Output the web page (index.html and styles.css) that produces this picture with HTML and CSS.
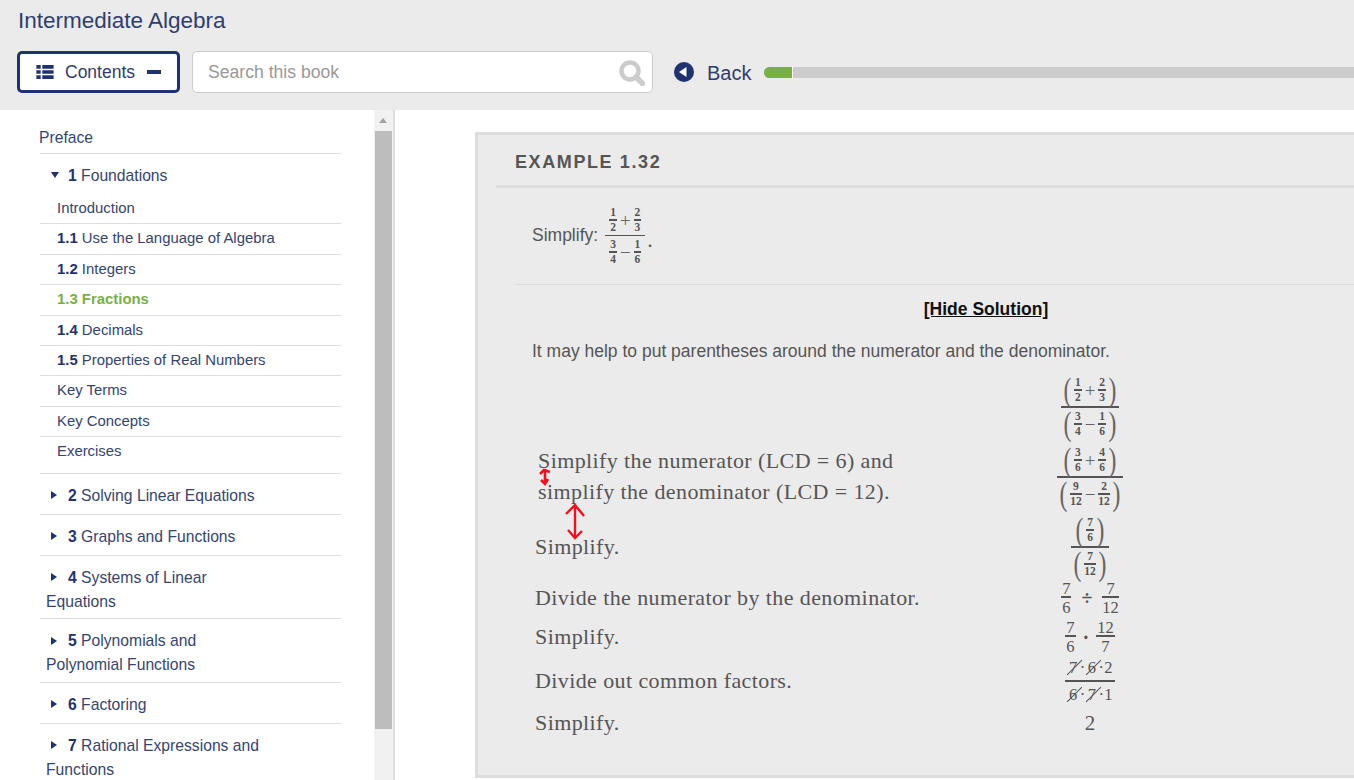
FILE: index.html
```html
<!DOCTYPE html>
<html lang="en">
<head>
<meta charset="utf-8">
<title>Intermediate Algebra</title>
<link rel="stylesheet" href="styles.css">
</head>
<body>
<header class="top">
  <h1 class="book-title">Intermediate Algebra</h1>
  <div class="toolbar">
    <button class="contents-btn">
      <svg class="list-icon" viewBox="0 0 16 13" width="18" height="14"><path d="M0 0h4v3.4H0zM5.5 0H16v3.4H5.5zM0 4.8h4v3.4H0zM5.5 4.8H16v3.4H5.5zM0 9.6h4V13H0zM5.5 9.6H16V13H5.5z"/></svg>
      <span>Contents</span>
      <span class="minus"></span>
    </button>
    <div class="search">
      <span class="placeholder">Search this book</span>
      <svg class="search-icon" viewBox="0 0 26 26" width="26" height="26"><circle cx="11" cy="11" r="8.5" fill="none" stroke="#ccc" stroke-width="4.5"/><path d="M17 17l6.5 6.5" stroke="#ccc" stroke-width="5.5" stroke-linecap="round"/></svg>
    </div>
    <a class="back">
      <svg viewBox="0 0 20 20" width="20" height="20"><circle cx="10" cy="10" r="10" fill="#1f3370"/><path d="M5 10l7.5-5v10z" fill="#fff"/></svg>
      <span>Back</span>
    </a>
    <div class="progress"><div class="progress-fill"></div></div>
  </div>
</header>
<div class="main">
  <aside class="sidebar">
    <nav class="toc">
      <div class="toc-preface">Preface</div>
      <div class="chapter open">
        <div class="chapter-title"><span class="tri tri-down"></span><b>1</b> Foundations</div>
        <ul class="sections">
          <li>Introduction</li>
          <li><b>1.1</b> Use the Language of Algebra</li>
          <li><b>1.2</b> Integers</li>
          <li class="current"><b>1.3</b> Fractions</li>
          <li><b>1.4</b> Decimals</li>
          <li><b>1.5</b> Properties of Real Numbers</li>
          <li>Key Terms</li>
          <li>Key Concepts</li>
          <li>Exercises</li>
        </ul>
      </div>
      <div class="chapter"><div class="chapter-title"><span class="tri"></span><b>2</b> Solving Linear Equations</div></div>
      <div class="chapter"><div class="chapter-title"><span class="tri"></span><b>3</b> Graphs and Functions</div></div>
      <div class="chapter two-line"><div class="chapter-title"><span class="tri"></span><b>4</b> Systems of Linear<br>Equations</div></div>
      <div class="chapter two-line"><div class="chapter-title"><span class="tri"></span><b>5</b> Polynomials and<br>Polynomial Functions</div></div>
      <div class="chapter"><div class="chapter-title"><span class="tri"></span><b>6</b> Factoring</div></div>
      <div class="chapter two-line"><div class="chapter-title"><span class="tri"></span><b>7</b> Rational Expressions and<br>Functions</div></div>
    </nav>
    <div class="scrollbar"><div class="scroll-arrow"></div><div class="scroll-thumb"></div></div>
  </aside>
  <main class="content">
    <section class="example">
      <div class="example-head">EXAMPLE 1.32</div>
      <div class="problem">
        <span class="problem-label">Simplify:</span>
        <span class="frac big-frac">
          <span class="num"><span class="frac tiny"><span class="num">1</span><span class="den">2</span></span><span class="op">+</span><span class="frac tiny"><span class="num">2</span><span class="den">3</span></span></span>
          <span class="den"><span class="frac tiny"><span class="num">3</span><span class="den">4</span></span><span class="op">−</span><span class="frac tiny"><span class="num">1</span><span class="den">6</span></span></span>
        </span>
        <span class="period">.</span>
      </div>
      <div class="hide-row"><a class="hide-link">[Hide Solution]</a></div>
      <p class="intro">It may help to put parentheses around the numerator and the denominator.</p>
      <div class="steps">
        <div class="step h1">
          <div class="step-text"></div>
          <div class="step-math">
            <span class="frac paren-frac">
              <span class="num"><i class="p">(</i><span class="frac tiny"><span class="num">1</span><span class="den">2</span></span><span class="op">+</span><span class="frac tiny"><span class="num">2</span><span class="den">3</span></span><i class="p">)</i></span>
              <span class="den"><i class="p">(</i><span class="frac tiny"><span class="num">3</span><span class="den">4</span></span><span class="op">−</span><span class="frac tiny"><span class="num">1</span><span class="den">6</span></span><i class="p">)</i></span>
            </span>
          </div>
        </div>
        <div class="step h2">
          <div class="step-text inset">Simplify the numerator (LCD = 6) and<br>simplify the denominator (LCD = 12).</div>
          <div class="step-math">
            <span class="frac paren-frac">
              <span class="num"><i class="p">(</i><span class="frac tiny"><span class="num">3</span><span class="den">6</span></span><span class="op">+</span><span class="frac tiny"><span class="num">4</span><span class="den">6</span></span><i class="p">)</i></span>
              <span class="den"><i class="p">(</i><span class="frac tiny"><span class="num">9</span><span class="den">12</span></span><span class="op">−</span><span class="frac tiny"><span class="num">2</span><span class="den">12</span></span><i class="p">)</i></span>
            </span>
          </div>
        </div>
        <div class="step h3">
          <div class="step-text">Simplify.</div>
          <div class="step-math">
            <span class="frac paren-frac">
              <span class="num"><i class="p">(</i><span class="frac tiny"><span class="num">7</span><span class="den">6</span></span><i class="p">)</i></span>
              <span class="den"><i class="p">(</i><span class="frac tiny"><span class="num">7</span><span class="den">12</span></span><i class="p">)</i></span>
            </span>
          </div>
        </div>
        <div class="step h4">
          <div class="step-text">Divide the numerator by the denominator.</div>
          <div class="step-math row-math">
            <span class="frac mid"><span class="num">7</span><span class="den">6</span></span><span class="divide">÷</span><span class="frac mid"><span class="num">7</span><span class="den">12</span></span>
          </div>
        </div>
        <div class="step h5">
          <div class="step-text">Simplify.</div>
          <div class="step-math row-math">
            <span class="frac mid"><span class="num">7</span><span class="den">6</span></span><span class="cdot">·</span><span class="frac mid"><span class="num">12</span><span class="den">7</span></span>
          </div>
        </div>
        <div class="step h6">
          <div class="step-text">Divide out common factors.</div>
          <div class="step-math">
            <span class="frac mid cancel-frac">
              <span class="num"><s class="x">7</s>·<s class="x">6</s>·2</span>
              <span class="den"><s class="x">6</s>·<s class="x">7</s>·1</span>
            </span>
          </div>
        </div>
        <div class="step h7">
          <div class="step-text">Simplify.</div>
          <div class="step-math answer">2</div>
        </div>
      </div>
      <svg class="mark mark-small" viewBox="0 0 14 20" width="14" height="20"><path d="M7 17V2M2 7l4-4 6 2M3 13l4 4 3-5" fill="none" stroke="#f01020" stroke-width="2.6"/></svg>
      <svg class="mark mark-large" viewBox="0 0 22 38" width="22" height="38"><path d="M11 2v33M2 11l9-9 9 11M4 27l7 8 7-7" fill="none" stroke="#f01020" stroke-width="2.4"/></svg>
    </section>
  </main>
</div>
</body>
</html>
```
FILE: styles.css
```css
* { box-sizing: border-box; }
html, body { margin: 0; height: 780px; overflow: hidden; background: #fff; }
body { font-family: "Liberation Sans", Arial, sans-serif; color: #555; }

.top { height: 110px; background: #ebebeb; padding: 7px 0 0 17px; overflow: hidden; }
.book-title { margin: 0 0 0 1px; font-size: 22.5px; line-height: 27px; font-weight: 400; color: #2f3e6e; }
.toolbar { display: flex; align-items: center; margin-top: 17px; height: 42px; }
.toolbar > * { flex: none; }
.contents-btn { width: 163px; height: 42px; display: flex; align-items: center; gap: 11px; padding: 0 0 0 16px; background: #fff; border: 3px solid #1f3370; border-radius: 5px; font: 17.5px "Liberation Sans", sans-serif; color: #2f3e6e; }
.list-icon { fill: #1f3370; flex: none; }
.minus { width: 14px; height: 3.5px; background: #1f3370; margin-left: 1px; }
.search { margin-left: 12px; width: 461px; height: 42px; background: #fff; border: 1px solid #ccc; border-radius: 5px; display: flex; align-items: center; justify-content: space-between; padding: 0 7px 0 15px; }
.placeholder { font-size: 17.6px; color: #999; }
.search-icon { margin-top: 1px; }
.back { display: flex; align-items: center; gap: 13px; margin-left: 21px; font-size: 20px; color: #2f3e6e; }
.back span { margin-top: 2px; }
.progress { width: 600px; height: 11px; margin-left: 13px; background: #ccc; border-radius: 6px 0 0 6px; overflow: hidden; }
.progress-fill { width: 29px; height: 11px; background: #78b046; border-right: 1px solid #fff; }

.main { display: flex; height: 670px; }
.sidebar { width: 395px; flex: none; display: flex; border-right: 2px solid #ddd; overflow: hidden; }
.toc { width: 374px; flex: none; padding: 16px 33px 0 40px; color: #36456f; font-size: 15.7px; }
.toc b { color: #1f3370; }
.toc-preface { height: 28px; line-height: 24px; border-bottom: 1px solid #ddd; text-indent: -1px; }
.chapter { border-bottom: 1px solid #ddd; padding: 10px 6px 6px 6px; }
.chapter.two-line { padding-bottom: 4.5px; }
.chapter-title { line-height: 24px; }
.chapter.open { padding-bottom: 5px; }
.tri { display: inline-block; width: 0; height: 0; margin: 0 11px 2px 5px; border-style: solid; border-width: 4px 0 4px 6px; border-color: transparent transparent transparent #1f3370; vertical-align: middle; }
.tri.tri-down { margin: 0 9px 3px 5px; border-width: 6px 4px 0 4px; border-color: #1f3370 transparent transparent transparent; }
.sections { list-style: none; margin: 6px -6px 0 -6px; padding: 0; font-size: 14.9px; }
.sections li { height: 30.4px; line-height: 29px; padding-left: 17px; border-bottom: 1px solid #ddd; white-space: nowrap; }
.sections li:last-child { border-bottom: 0; }
.sections .current, .sections .current b { color: #78b046; font-weight: 700; }

.scrollbar { width: 19px; flex: none; background: #f1f1f1; display: flex; flex-direction: column; align-items: center; }
.scroll-arrow { height: 21px; width: 100%; position: relative; }
.scroll-arrow::after { content: ""; position: absolute; left: 5px; top: 8px; border: 4.5px solid transparent; border-top: 0; border-bottom: 5px solid #a3a3a3; }
.scroll-thumb { width: 17px; height: 598px; background: #bdbdbd; }

.content { flex: 1; min-width: 0; padding: 22px 0 0 80px; overflow: hidden; }
.example { position: relative; width: 1000px; height: 646px; background: #ebebeb; border: 3px solid #ddd; padding: 0 0 0 18px; }
.example-head { height: 53px; line-height: 54px; padding-left: 19px; border-bottom: 3px solid #ddd; font-weight: 700; font-size: 18px; letter-spacing: 1.6px; color: #555; }

.problem { display: flex; align-items: center; height: 97px; margin-left: 19px; padding-left: 17px; border-bottom: 1px solid #ddd; font-size: 17.5px; color: #555; }
.problem-label { margin-right: 7px; margin-bottom: 2px; }
.period { font: 22px "Liberation Serif", serif; margin-top: 8px; margin-left: 2px; }

.frac { display: inline-flex; flex-direction: column; align-items: center; font-family: "Liberation Serif", serif; vertical-align: middle; }
.frac > .num, .frac > .den { display: flex; align-items: center; justify-content: center; }
.frac > .num { align-self: stretch; border-bottom: 1px solid #555; }
.tiny { font-size: 11.5px; font-weight: 700; line-height: 11px; margin: 0 1px; }
.tiny > .num { padding: 0 1px 1px; border-bottom-width: 2px; }
.tiny > .den { padding-top: 1px; }
.op { font: 19px/1 "Liberation Serif", serif; margin: 0 2px; color: #666; }
.big-frac { font-size: 16px; }
.big-frac > .num { padding: 0 3px 2px; }
.big-frac > .den { padding-top: 3px; }

.hide-row { height: 47px; line-height: 49px; text-align: center; padding-right: 34px; }
.hide-link { font-weight: 700; font-size: 17.5px; color: #111; text-decoration: underline; position: relative; left: 19px; }
.intro { margin: 9px 0 0 36px; height: 20px; line-height: 20px; font-size: 17.5px; color: #555; }

.steps { margin-top: 12px; padding-left: 39px; font: 22px/31px "Liberation Serif", serif; color: #555; }
.step { display: flex; align-items: center; }
.h1 { height: 68px; } .h2 { height: 72px; } .h3 { height: 68px; } .h4 { height: 34px; } .h5 { height: 44px; } .h6 { height: 44px; } .h7 { height: 40px; }
.step-text { width: 496px; flex: none; letter-spacing: .4px; padding-bottom: 2px; }
.step-text.inset { padding-left: 3px; }
.step-math { width: 118px; display: flex; justify-content: center; align-items: center; flex: none; }
.paren-frac > .num, .paren-frac > .den { padding: 0 1px; }
.paren-frac > .num { border-bottom-width: 2px; padding-bottom: 1px; }
.paren-frac > .den { padding-top: 1px; }
.p { font-style: normal; font-size: 33px; line-height: 30px; font-weight: 400; color: #666; display: block; transform: scaleX(.72); }
.mid { font-size: 16.5px; line-height: 13px; font-weight: 400; }
.mid > .num { padding: 0 1px 1px; border-bottom-width: 2px; }
.mid > .den { padding-top: 3px; }
.divide { margin: 0 10px; font-size: 20px; line-height: 20px; font-weight: 700; }
.cdot { margin: 0 7px; font-size: 20px; font-weight: 700; line-height: 20px; }
.cancel-frac > .num, .cancel-frac > .den { padding: 0 2px 6px; letter-spacing: .5px; }
.cancel-frac > .den { padding-top: 6px; padding-bottom: 0; }
.x { position: relative; text-decoration: none; margin: 0 2px; }
.x::after { content: ""; position: absolute; left: -5px; top: 6px; width: 21px; height: 1px; background: #555; transform: rotate(-45deg); }
.answer { font-size: 21px; }

.mark { position: absolute; }
.mark-small { left: 60px; top: 332px; }
.mark-large { left: 86px; top: 368px; }
```
